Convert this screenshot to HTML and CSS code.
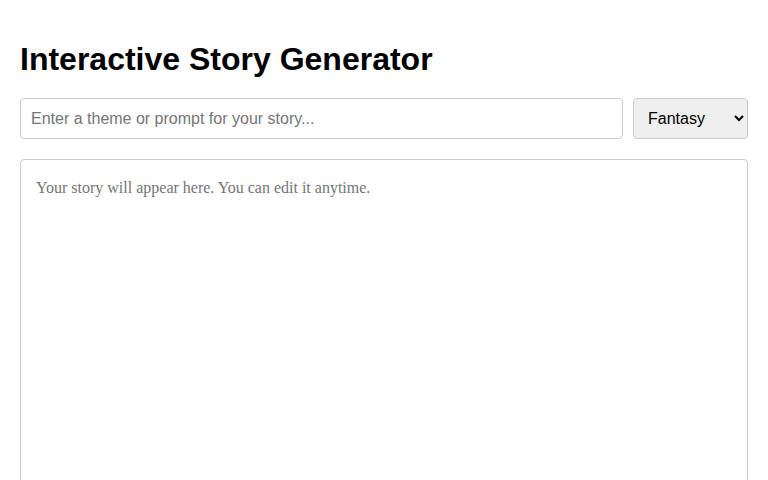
FILE: index.html
```html
<!DOCTYPE html>
<html>
<head>
<meta charset="utf-8">
<link rel="stylesheet" href="styles.css">
</head>
<body>
<div class="app">
  <h1 class="title">Interactive Story Generator</h1>
  <div class="controls">
    <input class="prompt" type="text" placeholder="Enter a theme or prompt for your story...">
    <select class="genre">
      <option>Fantasy</option>
      <option>Sci-Fi</option>
      <option>Mystery</option>
    </select>
  </div>
  <textarea class="story" placeholder="Your story will appear here. You can edit it anytime."></textarea>
</div>
</body>
</html>
```
FILE: styles.css
```css
html, body {
  margin: 0;
  padding: 0;
  background: #fff;
}
.app {
  padding: 20px;
  font-family: "Liberation Sans", Arial, sans-serif;
}
.title {
  font-size: 32px;
  font-weight: bold;
  margin: 21px 0 20px;
  color: #000;
}
.controls {
  display: flex;
  gap: 10px;
}
.prompt {
  flex: 1;
  font-family: "Liberation Sans", Arial, sans-serif;
  font-size: 16px;
  padding: 10px;
  border: 1px solid #ccc;
  border-radius: 4px;
  height: 41px;
  box-sizing: border-box;
}
.prompt::placeholder {
  color: #757575;
}
.genre {
  width: 115px;
  height: 41px;
  box-sizing: border-box;
  font-family: "Liberation Sans", Arial, sans-serif;
  font-size: 16px;
  padding: 0 6px 0 10px;
  border: 1px solid #ccc;
  border-radius: 4px;
  background: #efefef;
  color: #000;
}
.story {
  display: block;
  margin-top: 20px;
  width: 100%;
  height: 400px;
  box-sizing: border-box;
  padding: 15px;
  font-family: "Liberation Serif", "Times New Roman", serif;
  font-size: 16px;
  line-height: 1.6;
  border: 1px solid #ccc;
  border-radius: 4px;
  resize: vertical;
}
.story::placeholder {
  color: #757575;
}
```
